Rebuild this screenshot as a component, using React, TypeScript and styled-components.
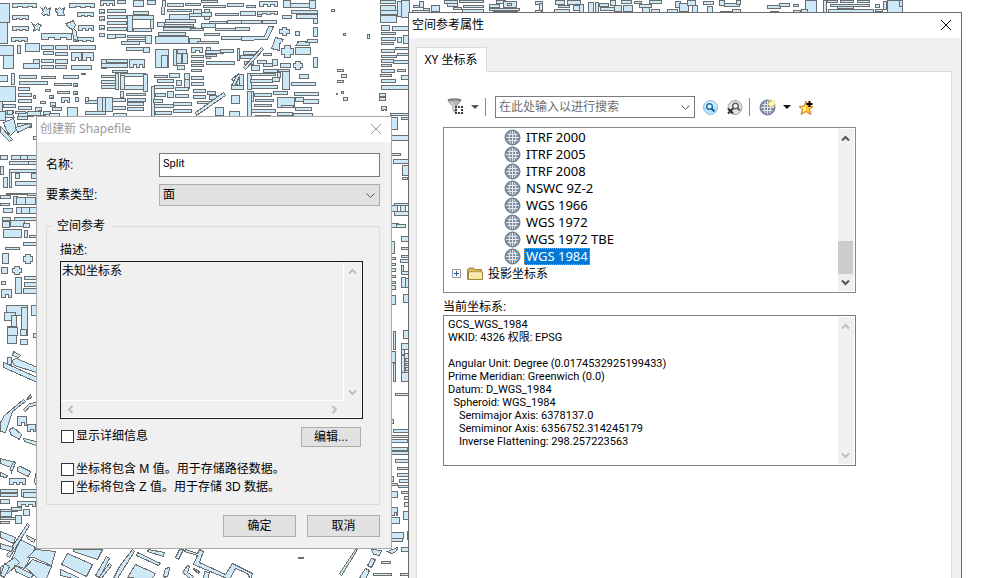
import React from "react";
import styled, { createGlobalStyle, css } from "styled-components";

const GlobalStyle = createGlobalStyle`
  *, *::before, *::after { box-sizing: border-box; }
  body { margin: 0; background: #fff; }
  button, input, select, textarea { font: inherit; color: inherit; border-radius: 0; margin: 0; }
`;

const uiFont = `"Noto Sans", "Noto Sans CJK SC", sans-serif`;
const cjkFont = `"Liberation Sans", "Noto Sans CJK SC", sans-serif`;

/* ---------- map ---------- */

type Tile = { x: number; y: number; blocks: string; shapes?: string[] };

/* Footprints are stored in thirds of a pixel. Each entry is
   [kind] x y w h: r = block, c = block with a toothed lower edge, x = cross. */
const tiles: Tile[] = [
  {
    x: 0,
    y: 0,
    blocks: `
    r -6 10 32 56;r -6 66 28 64;c 35 8 74 14;c 208 8 74 14;c 35 44 50 14;c 232 36 48 13;c 35 78 48 13;c 234 76 46 13;
    c 32 110 50 14;c 122 98 90 20;c 220 110 60 13;r -6 136 46 28;r 10 164 30 39;r 52 134 8 24;
    r 74 130 44 22;r 124 136 36 11;r 166 136 36 11;r 208 136 78 11;r 128 154 30 9;r 166 156 36 9;r 124 176 36 10;
    r 166 178 36 10;r 68 188 50 16;r 100 176 18 14;r 122 196 38 9;r 166 196 32 9;r 212 196 62 10;c 212 156 32 24;c 246 156 34 24;
    r -4 224 26 20;r 34 218 8 34;r 56 226 52 9;r 124 228 40 6;r 188 226 46 7;r 244 218 10 4;r 56 244 84 7;r 162 248 50 8;
    r -4 258 50 46;r 54 262 34 9;r 54 279 38 9;r 54 298 38 9;r 54 317 38 9;r 54 336 44 12;r 100 284 6 11;r 134 266 16 6;r 172 272 36 6;
    c 218 248 14 9;c 218 274 14 9;r 224 290 10 14;c 146 284 14 10;r 120 302 16 8;c 106 322 18 10;c 150 306 16 11;c 182 292 26 14;r 200 320 30 40;
    r 10 312 34 8;r 14 330 26 8;r -4 304 10 44;r 128 334 22 8;r 108 346 26 9;r 156 322 28 7;r 148 340 30 10;
    c 299 0 44 14;r 352 0 22 8;r 400 0 30 18;r 440 0 24 12;c 298 26 14 12;c 298 48 14 12;c 298 74 14 12;r 298 98 14 10;
    r 322 28 52 9;r 322 44 56 9;r 322 62 56 9;r 322 80 56 9;r 320 102 26 12;r 346 102 28 9;r 380 44 16 50;r 396 44 64 12;
    r 450 56 10 28;r 398 84 54 8;r 398 34 46 7;r 380 104 58 7;r 380 116 58 7;r 362 124 56 8;r 378 142 56 9;r 428 140 20 16;r 436 104 18 26;
    r 502 10 46 7;r 500 26 74 7;r 506 42 60 14;r 494 56 90 10;r 470 66 22 12;r 492 72 88 7;r 488 82 98 7;r 474 96 80 8;r 464 108 100 22;
    r 566 114 34 14;r 590 122 64 8;r 556 8 44 7;r 580 28 24 12;r 566 40 54 8;r 612 28 14 28;r 604 36 28 12;r 610 14 66 7;r 602 1 50 5;
    r 680 10 50 9;r 738 14 26 7;r 644 38 70 7;r 720 34 44 10;r 770 40 14 8;r 628 64 50 6;r 680 60 44 9;r 724 60 60 9;r 786 60 42 8;
    r 604 70 40 12;r 570 84 40 7;r 644 84 60 6;r 704 80 44 10;r 612 98 44 6;r 664 108 60 8;r 724 110 66 8;
    c 776 4 54 15;c 772 34 58 9;r 850 0 20 22;r 870 10 56 12;r 928 0 16 24;r 874 30 78 9;r 888 42 64 12;r 940 54 12 16;r 846 46 28 8;
    x 838 82 30 24;x 844 136 36 34;x 878 182 28 26;r 884 92 12 14;r 940 80 10 28;r 890 124 34 12;r 920 118 30 9;r 886 142 44 20;r 940 170 12 32;
    r 304 176 14 28;r 318 178 62 7;r 302 190 78 12;c 386 178 46 24;r 336 210 46 7;r 302 224 44 8;r 302 240 44 8;r 302 256 44 9;r 344 218 10 50;
    r 360 218 76 9;r 360 226 12 40;r 372 254 66 14;r 428 222 14 50;r 254 300 40 8;r 254 292 10 12;r 290 290 46 42;r 306 290 8 42;r 336 294 40 9;
    r 336 318 40 10;r 254 334 60 8;r 338 338 40 10;r 380 294 54 9;r 380 306 50 9;r 380 322 48 8;r 360 272 10 20;r 378 278 58 7;
    r 452 258 10 92;r 462 224 40 8;r 470 238 50 7;r 462 256 56 8;r 464 280 30 9;r 500 274 18 18;r 460 296 26 9;r 462 312 56 10;r 466 334 48 8;
    r 464 146 40 54;r 484 166 18 34;r 518 148 10 46;r 530 148 28 12;r 528 160 14 30;r 546 160 16 30;r 530 196 22 12;
    c 572 142 34 14;r 574 164 34 8;r 574 180 34 7;r 574 192 34 7;r 574 208 28 6;r 574 228 34 8;r 574 246 36 9;r 506 220 30 10;r 528 240 14 16;
    r 552 218 16 18;r 552 236 14 28;r 524 262 40 8;r 524 282 40 10;r 518 306 54 10;r 518 328 56 8;r 618 140 12 34;r 616 150 54 9;r 616 162 32 7;
    r 660 148 40 9;r 618 184 84 8;r 710 144 8 36;r 728 154 40 7;r 720 166 40 8;r 732 184 28 8;r 580 268 34 9;r 580 284 34 9;r 590 302 40 8;
    r 620 272 24 9;r 628 286 20 10;r 692 284 26 26;r 644 322 26 24;r 688 332 28 28;r 692 256 36 10;
    r 754 196 24 14;r 772 180 26 9;r 790 206 40 9;r 816 178 14 16;r 788 190 28 7;r 790 158 22 8;r 742 218 12 48;r 750 218 74 8;r 750 238 66 9;
    r 754 254 78 10;r 816 232 20 11;r 840 190 30 12;r 834 206 34 7;r 846 214 22 54;r 896 222 28 12;r 874 246 70 9;r 830 216 10 14;
    r 740 272 12 78;r 752 272 8 32;r 762 280 50 7;r 766 296 54 8;r 762 312 50 7;r 752 328 74 7;r 764 344 46 9;r 820 272 40 10;
    r 830 292 52 30;r 842 314 36 8;r 882 276 72 10;r 884 290 24 14;r 910 298 44 10;r 884 320 50 10;r 880 340 56 12;r 830 336 46 10;
    r 994 28 8 5;r 1028 98 8 8;r 1102 102 6 12;r 1010 208 20 5;r 1024 222 15 10;r 1012 240 18 6;r 1022 272 6 8;r 1030 290 10 10;r 1009 278 3 4;
    r 1140 0 44 9;r 1140 16 44 14;r 1140 30 50 12;r 1140 46 48 20;r 1192 4 10 44;r 1204 0 22 50;r 1144 76 24 13;r 1176 78 50 12;
    r 1144 96 40 7;r 1144 112 40 7;r 1144 126 36 6;r 1190 110 14 16;r 1210 104 16 26;r 1144 148 38 8;r 1144 164 44 7;r 1144 178 36 8;r 1144 192 30 7;
    r 1184 142 40 6;r 1190 158 36 7;r 1180 180 46 8;r 1142 208 40 7;r 1140 222 32 7;r 1142 236 44 9;r 1142 256 82 10;r 1192 206 24 6;r 1204 226 20 11;
    r 1138 278 16 9;r 1138 290 16 9;c 1144 318 14 12;r 1170 338 56 8`,
    shapes: [
      "486,0 496,0 492,42 482,42",
      "724,108 792,108 804,78 818,78 802,118 724,120",
      "728,202 784,140 790,146 734,206",
      "584,336 668,276 674,284 588,346",
      "196,68 208,66 218,60 224,74 220,84 228,94 232,120 220,118 216,86 204,82",
      "96,70 104,74 110,68 124,76 116,82 118,90 108,88 98,92 102,82",
      "122,24 130,26 134,18 140,26 150,22 146,34 148,44 136,42 128,46 122,38 128,32",
      "164,24 172,26 178,22 184,26 192,22 188,34 192,46 180,44 170,46 172,36 164,32",
      "694,236 714,218 718,224 698,240",
      "824,112 848,116 844,126 838,128 838,150 814,144 820,130",
      "694,256 712,222 728,222 728,256",
      "704,252 716,228 716,256",
      "886,136 898,124 926,126 926,136",
      "0,350 30,330 42,350",
    ],
  },
  {
    x: 0,
    y: 330,
    blocks: `
    r -4 2 20 28;r 20 0 16 12;r 44 2 30 8;r 80 4 40 12;r 52 38 40 14;r 52 18 30 8;r 98 78 12 9;r 0 136 22 10;r 32 134 76 12;r 60 134 20 12;
    r 26 154 60 8;r 84 154 26 8;r 26 176 84 9;r 0 168 10 24;r 28 186 6 46;r 46 190 12 14;r 94 190 16 14;r 44 214 64 12;r 10 202 12 30;
    r 18 248 64 5;r 82 248 28 8;r 38 258 14 24;r 48 262 27 20;r 75 262 31 20;r 0 254 30 9;r 0 278 26 8;r 10 294 26 11;r 48 290 16 20;r 62 290 24 20;r 86 290 24 20;
    r 6 322 24 8;r 42 322 66 7;r 6 334 22 18;r 30 330 42 18;r 10 358 52 22;r 70 340 16 10;r 72 360 8 22;r 86 374 24 8;r 70 396 40 8;r 14 410 44 8;
    r 6 428 18 30;x 68 432 28 28;x 36 468 28 24;r 4 470 18 20;r 72 498 38 9;r 46 502 18 48;r 72 516 38 12;r 68 534 40 16;r 4 514 10 8;c 4 536 30 24;
    r 18 586 62 30;r 12 606 34 24;r 34 616 14 60;r 62 590 18 86;r 92 586 18 30;r 22 648 26 42;r 100 668 10 14`,
    shapes: ["10,36 40,24 48,56 30,74 18,60", "0,48 36,86 26,94 0,66", "44,50 88,38 90,48 50,66"],
  },
  {
    x: 0,
    y: 990,
    blocks: `
    r 20 -8 30 24;r 22 16 26 22;r 60 -4 18 20;r 60 28 22 14;r 20 80 12 22;c 52 258 26 26;c 82 282 24 20;c 28 444 46 18;r 0 478 52 8;r 0 490 50 7;
    r 62 476 48 22;r 70 486 40 14;r 0 508 26 10;c 50 512 54 16;r 0 536 52 8;r 0 544 32 14;r 32 532 30 9;r 0 560 52 6;r 46 556 18 22;r 68 538 18 18;r 0 572 28 8`,
    shapes: [
      "8,96 110,142 110,156 8,112",
      "38,64 60,74 54,82 36,76",
      "34,90 48,84 110,112 108,126 42,104",
      "0,276 12,254 70,206 76,212 36,244 16,306 0,302",
      "78,206 90,192 94,200 82,208",
      "70,238 86,218 108,216 110,226 88,228 76,244",
      "28,298 38,292 64,312 56,328 30,312",
      "0,384 46,396 40,414 0,398",
      "30,414 40,392 46,396 34,426",
      "52,412 60,408 90,422 84,438 50,424",
      "0,426 20,434 18,442 0,438",
      "70,324 108,332 108,344 72,332",
      "18,676 80,580 86,586 28,682",
      "28,698 60,626 104,650 72,714",
      "74,710 96,686 154,708 138,744 110,744",
      "82,680 106,656 166,662 154,704 98,682",
      "0,604 46,622 40,638 0,620",
      "0,640 38,650 32,662 0,654",
      "0,712 42,682 56,696 20,730 0,728",
      "12,700 28,708 12,740 0,734",
      "42,704 98,732 90,744 44,724",
      "78,614 104,628 98,636 80,624",
      "104,430 110,426 110,470 102,456",
    ],
  },
  {
    x: 180,
    y: 1620,
    blocks: `r 714 50 14 4;r 938 98 56 8;r 1020 98 24 8;r 1022 20 24 13;r 962 62 28 8`,
    shapes: [
      "38,26 126,26 110,56 40,34",
      "22,40 96,72 78,108 4,72",
      "0,88 54,110 50,118 0,104",
      "104,104 138,48 148,54 116,112",
      "116,108 148,70 152,74 124,114",
      "216,26 222,34 172,114 158,114 178,78",
      "232,36 300,68 294,76 228,44",
      "264,26 312,36 308,48 260,34",
      "202,110 226,72 284,98 272,118",
      "316,84 328,80 324,104 312,112 308,104",
      "344,50 358,26 370,26 354,56",
      "376,26 410,38 418,26 430,32 416,66 494,102 516,70 576,98 570,116 562,100 524,84 506,118 400,72 412,46 372,32",
      "366,96 380,74 386,78 380,96 400,108 394,116",
      "432,94 448,96 440,116 430,116",
      "400,84 418,92 414,98 400,88",
      "838,100 884,26 890,28 844,104",
      "920,74 932,54 944,58 934,80",
      "896,110 914,84 928,90 916,116",
      "932,26 964,30 958,44 940,42",
      "982,32 1012,20 1008,34 992,38",
    ],
  },
  {
    x: 600,
    y: 330,
    blocks: `
    r 574 22 18 36;r 604 20 24 6;r 574 76 54 15;r 574 128 26 8;r 580 146 48 12;r 606 166 18 30;r 606 202 14 6;r 582 278 46 7;r 574 286 16 16;r 600 284 14 18;
    r 582 304 46 10;r 574 338 20 12;r 588 342 26 10;r 604 378 24 16;r 602 410 26 8;r 602 434 26 6;r 600 448 28 8;r 574 394 8 34;r 574 440 10 8;
    r 574 458 10 8;r 574 474 10 10;r 574 494 10 8;r 574 512 10 6;r 574 526 10 10;r 602 464 8 28;r 602 482 26 10;r 602 500 14 32;r 614 504 14 26;
    r 574 554 12 28;r 610 552 18 24`,
  },
  {
    x: 1164,
    y: 990,
    blocks: `
    r 14 4 8 52;r 46 0 18 24;r 40 38 22 18;r 38 58 10 14;r 40 76 8 72;r 48 68 14 58;r 52 84 10 8;r 52 98 10 8;r 52 112 10 8;r 40 126 22 26;
    r 10 64 12 32;r 14 98 6 56;r 22 190 40 6;r 10 268 6 10;r 16 298 46 8;r 10 314 52 6;r 10 328 46 8;r 10 350 46 9;r 10 364 50 8;
    r 22 388 40 9;r 28 410 34 8;r 28 430 34 9;r 32 448 30 7;r 30 464 32 8;r 10 438 6 14;r 10 458 16 8;r 40 482 22 8;r 10 482 18 20;r 48 498 14 9;
    r 48 516 14 12;c 10 532 18 24;r 10 560 22 18;r 44 542 18 24;r 10 606 36 18;r 10 624 32 8;r 56 604 8 24`,
  },
  {
    x: 1230,
    y: 0,
    blocks: `
    r 8 14 20 8;r 28 2 10 18;r 38 24 20 7;r 6 30 50 8;r 62 16 24 16;r 102 0 40 8;r 112 10 30 7;r 128 20 24 8;r 146 0 72 6;r 160 14 60 8;r 156 28 64 10;
    r 238 12 28 8;r 238 24 88 6;r 250 32 70 8;r 258 0 28 8;r 280 2 38 20;r 290 8 14 8;r 374 4 22 8;r 388 8 9 28;r 376 30 16 6;
    r 434 0 28 12;r 444 14 32 8;r 432 28 44 10;r 470 0 40 12;r 488 14 24 16;r 506 12 12 26;r 534 6 14 30;r 556 6 9 32;r 566 10 28 7;r 570 22 46 9;
    r 600 0 16 14;r 612 14 22 20;r 634 0 30 10;r 638 16 28 16;r 672 2 20 8;r 688 12 36 8;r 696 22 20 14;r 716 0 38 8;r 724 28 22 9;r 770 28 30 8;
    r 796 2 14 18;r 806 10 28 24;r 832 0 24 14;r 846 16 16 20;
    c 930 32 36 8;r 966 28 24 8;r 928 0 14 16;r 942 8 46 9;r 978 0 12 12;r 1070 14 40 9;r 1108 8 28 10;r 1150 12 14 7;r 1148 30 22 8;
    r 1186 0 32 38;r 1172 26 18 10;r 1240 0 8 38;r 1252 0 30 7;r 1260 12 116 5;r 1280 18 48 5;r 1254 28 136 10;r 1290 0 40 6;r 1340 0 36 6;
    r 1396 12 12 8;r 1394 26 22 6;r 1418 4 10 24;r 1430 0 46 38;r 1466 0 10 18;r 1080 32 24 5;r 880 4 28 8;r 892 18 14 20`,
  },
];

const px = (n: number) => Math.round(n / 3) + 0.5;

function footprint(kind: string, x: number, y: number, w: number, h: number) {
  const [l, t, r, b] = [px(x), px(y), px(x + w), px(y + h)];
  if (kind === "c") {
    const n = w > 40 ? 3 : 2;
    const step = (r - l) / (n * 2 - 1);
    const notch = b - Math.max(1, Math.round((b - t) / 3));
    let d = `M${l} ${t}H${r}V${b}`;
    for (let i = n - 1; i >= 0; i--) {
      const left = Math.round(l + step * i * 2) + 0.5;
      d += i ? `H${left}V${notch}H${left - Math.round(step)}V${b}` : `H${l}Z`;
    }
    return d;
  }
  if (kind === "x") {
    const a = Math.round((r - l) / 4);
    const c = Math.round((b - t) / 4);
    return `M${l + a} ${t}H${r - a}V${t + c}H${r}V${b - c}H${r - a}V${b}H${l + a}V${b - c}H${l}V${t + c}H${l + a}Z`;
  }
  return `M${l} ${t}H${r}V${b}H${l}Z`;
}

const footprints = tiles.flatMap((tile) => {
  const blocks = tile.blocks.split(";").map((entry) => {
    const [kind, x, y, w, h] = entry.trim().split(/\s+/);
    return footprint(kind, tile.x + +x, tile.y + +y, +w, +h);
  });
  const shapes = (tile.shapes ?? []).map((shape) => {
    const points = shape.split(" ").map((pair) => {
      const [x, y] = pair.split(",");
      return `${px(tile.x + +x)} ${px(tile.y + +y)}`;
    });
    return `M${points.join("L")}Z`;
  });
  return [...blocks, ...shapes];
});

const MapCanvas = styled.svg`
  position: absolute;
  top: 0;
  left: 0;
  width: 100%;
  height: 100%;
  shape-rendering: crispEdges;
  fill: #cde8f6;
  stroke: #6c6d6e;
`;

/* ---------- windows ---------- */

const Desktop = styled.main`
  position: relative;
  min-height: 100vh;
  overflow: hidden;
  background: #fff;
  font: 12px/16px ${cjkFont};
  color: #000;
`;

const Window = styled.section`
  position: absolute;
  display: flex;
  flex-direction: column;
  background: #f0f0f0;
`;

const ShapefileWindow = styled(Window)`
  left: 36px;
  top: 116px;
  width: 356px;
  border: 1px solid #a9a9a9;
`;

const PropertiesWindow = styled(Window)`
  left: 408px;
  right: 28px;
  top: 12px;
  bottom: 0;
  border: 1px solid #6a6a6a;
  border-bottom: 0;
`;

const TitleBar = styled.header<{ $inactive?: boolean }>`
  display: flex;
  align-items: center;
  justify-content: space-between;
  height: 25px;
  padding: 0 9px 1px 3px;
  background: #fff;
  color: ${(p) => (p.$inactive ? "#999" : "#000")};
  font-family: ${uiFont};
`;

const Title = styled.h1`
  margin: 0;
  font: inherit;
`;

const IconButton = styled.button`
  display: flex;
  align-items: center;
  justify-content: center;
  padding: 0;
  border: 0;
  background: none;
`;

const CloseIcon = () => (
  <svg width="12" height="12" viewBox="0 0 12 12" fill="none" stroke="currentColor">
    <path d="M1 1 11 11M11 1 1 11" />
  </svg>
);

const Chevron = styled.svg<{ $turn?: number; $tone?: string; $thin?: boolean }>`
  width: 9px;
  height: 9px;
  fill: none;
  stroke: ${(p) => p.$tone ?? "#555"};
  stroke-width: ${(p) => (p.$thin ? 1 : 2)};
  transform: rotate(${(p) => p.$turn ?? 0}deg);
`;

const Arrow = ({ turn = 0, tone, thin }: { turn?: number; tone?: string; thin?: boolean }) => (
  <Chevron viewBox="0 0 9 9" $turn={turn} $tone={tone} $thin={thin} aria-hidden>
    <path d={thin ? "M0.5 2.5 4.5 6.5 8.5 2.5" : "M1 2.5 4.5 6 8 2.5"} />
  </Chevron>
);

/* ---------- new shapefile form ---------- */

const Form = styled.form`
  display: flex;
  flex-direction: column;
  padding: 11px 11px 11px 9px;
`;

const Field = styled.div<{ $height: number }>`
  display: grid;
  grid-template-columns: 113px 1fr;
  align-items: center;
  height: ${(p) => p.$height}px;
  margin-bottom: 7px;
`;

const TextInput = styled.input`
  width: 100%;
  height: 24px;
  padding: 0 3px 3px;
  border: 1px solid #7a7a7a;
  background: #fff;
  font: 11px/16px Roboto, sans-serif;
`;

const SelectWrap = styled.div`
  display: grid;
  align-items: center;
  & > * { grid-area: 1 / 1; }
  & > svg { justify-self: end; margin-right: 5px; pointer-events: none; }
`;

const Select = styled.select`
  appearance: none;
  height: 22px;
  padding: 0 3px;
  border: 1px solid #adadad;
  background: #e1e1e1;
  outline: 0;
`;

const Group = styled.fieldset`
  min-width: 0;
  margin: 5px 0 10px;
  padding: 8px 16px 8px 13px;
  border: 1px solid #dcdcdc;
`;

const Legend = styled.legend`
  margin-left: -7px;
  padding: 0 6px 0 4px;
`;

const DescriptionBox = styled.div`
  display: grid;
  grid-template-columns: 1fr 19px;
  grid-template-rows: 138px 18px;
  margin: 3px 0 8px;
  border: 1px solid #1a1a1a;
`;

const Description = styled.textarea`
  resize: none;
  overflow: hidden;
  padding: 1px;
  border: 0;
  background: transparent;
`;

const SunkenBar = styled.div<{ $horizontal?: boolean }>`
  display: flex;
  flex-direction: ${(p) => (p.$horizontal ? "row" : "column")};
  justify-content: space-between;
  align-items: center;
  ${(p) =>
    p.$horizontal
      ? css`padding: 0 4px 0 5px; border-top: 1px solid #fff; border-bottom: 1px solid #fff;`
      : css`padding: 5px 0 3px; border-left: 1px solid #fff; border-right: 1px solid #fff;`}
`;

const Corner = styled.div`
  border: solid #fff;
  border-width: 0 1px 1px 0;
`;

const Row = styled.div`
  display: flex;
  align-items: flex-start;
  justify-content: space-between;
  padding-right: 2px;
  margin-bottom: 13px;
`;

const CheckLabel = styled.label`
  display: flex;
  align-items: center;
  gap: 2px;
  height: 18px;
  padding-left: 1px;
  white-space: nowrap;
`;

const CheckBox = styled.input`
  appearance: none;
  flex: none;
  width: 13px;
  height: 13px;
  border: 1px solid #333;
  background: #fff;
`;

const Button = styled.button<{ $wide?: boolean }>`
  width: ${(p) => (p.$wide ? 73 : 60)}px;
  height: ${(p) => (p.$wide ? 22 : 20)}px;
  padding: 0;
  border: 1px solid #adadad;
  background: #e1e1e1;
`;

const Actions = styled.div`
  display: flex;
  justify-content: flex-end;
  gap: 11px;
`;

function ShapefileForm() {
  return (
    <ShapefileWindow aria-label="创建新 Shapefile">
      <TitleBar $inactive>
        <Title>创建新 Shapefile</Title>
        <IconButton aria-label="关闭"><CloseIcon /></IconButton>
      </TitleBar>
      <Form onSubmit={(e) => e.preventDefault()}>
        <Field $height={24}>
          <label htmlFor="name">名称:</label>
          <TextInput id="name" defaultValue="Split" />
        </Field>
        <Field $height={22}>
          <label htmlFor="kind">要素类型:</label>
          <SelectWrap>
            <Select id="kind" defaultValue="面"><option>面</option></Select>
            <Arrow thin />
          </SelectWrap>
        </Field>
        <Group>
          <Legend>空间参考</Legend>
          <label htmlFor="description">描述:</label>
          <DescriptionBox>
            <Description id="description" readOnly value="未知坐标系" />
            <SunkenBar>
              <Arrow turn={180} tone="#bfbfbf" />
              <Arrow tone="#bfbfbf" />
            </SunkenBar>
            <SunkenBar $horizontal>
              <Arrow turn={90} tone="#bfbfbf" />
              <Arrow turn={270} tone="#bfbfbf" />
            </SunkenBar>
            <Corner />
          </DescriptionBox>
          <Row>
            <CheckLabel><CheckBox type="checkbox" />显示详细信息</CheckLabel>
            <Button type="button">编辑...</Button>
          </Row>
          <CheckLabel><CheckBox type="checkbox" />坐标将包含 M 值。用于存储路径数据。</CheckLabel>
          <CheckLabel><CheckBox type="checkbox" />坐标将包含 Z 值。用于存储 3D 数据。</CheckLabel>
        </Group>
        <Actions>
          <Button $wide type="submit">确定</Button>
          <Button $wide type="button">取消</Button>
        </Actions>
      </Form>
    </ShapefileWindow>
  );
}

/* ---------- spatial reference properties ---------- */

const TabArea = styled.div`
  display: flex;
  flex: 1;
  flex-direction: column;
  padding: 9px 9px 0 7px;
`;

const Tab = styled.button`
  align-self: flex-start;
  width: 71px;
  height: 25px;
  margin-bottom: -1px;
  padding: 0 1px 1px 0;
  border: 1px solid #dcdcdc;
  border-bottom: 0;
  background: #fff;
  font-family: ${uiFont};
  z-index: 1;
`;

const Panel = styled.div`
  flex: 1;
  padding: 24px 95px 0 26px;
  border: 1px solid #dcdcdc;
  border-bottom: 0;
  background: #fff;
`;

const Toolbar = styled.div`
  display: flex;
  align-items: center;
  height: 22px;
  padding-left: 4px;
`;

const Divider = styled.span`
  width: 1px;
  height: 18px;
  margin: 0 9px 0 6px;
  background: #8a8a8a;
`;

const SearchBox = styled.div`
  display: flex;
  align-items: center;
  flex: 0 1 200px;
  height: 22px;
  padding: 0 4px 0 3px;
  border: 1px solid #7a7a7a;
`;

const SearchInput = styled.input`
  flex: 1;
  min-width: 0;
  padding: 0;
  border: 0;
  outline: 0;
  background: none;
  &::placeholder { color: #6d6d6d; opacity: 1; }
`;

const Tools = styled.div<{ $first?: boolean }>`
  display: flex;
  align-items: center;
  gap: 7px;
  padding-left: ${(p) => (p.$first ? 0 : 7)}px;
`;

const Funnel = () => (
  <svg width="17" height="18" viewBox="0 0 17 18">
    <path d="M1 2.500H14L9 8.500V15L6 12.500V8.500Z" fill="#b9b9b9" stroke="#8f8f8f" />
    <path d="M1 2Q7.500 0 14 2" fill="none" stroke="#777" strokeWidth="1.500" />
    <path d="M4 4 7 8V12" fill="none" stroke="#ececec" />
    <path
      d="M8 8H10V10H8ZM11 8H13V10H11ZM14 8H16V10H14ZM8 11H10V13H8ZM14 11H16V13H14ZM8 14H10V16H8ZM11 14H13V16H11ZM14 14H16V16H14Z"
      fill="#3a3a3a"
    />
  </svg>
);

const Caret = ({ tone }: { tone: string }) => (
  <svg width="8" height="5" viewBox="0 0 8 5"><path d="M0 0H8L4 4Z" fill={tone} /></svg>
);

const Magnifier = () => (
  <svg width="17" height="17" viewBox="0 0 17 17">
    <circle cx="8.5" cy="8.5" r="7" fill="#b8e0f8" stroke="#8dbde0" />
    <path d="M2.500 8Q3.500 2.500 8.500 2.500T14.500 8Q9 5 2.500 8" fill="#d9f0fd" />
    <circle cx="7.5" cy="7.5" r="2.800" fill="#e6f6ff" stroke="#1673ae" strokeWidth="1.500" />
    <path d="M9.5 9.5 12.500 12.500" stroke="#12619a" strokeWidth="2" />
  </svg>
);

const ClearSearch = () => (
  <svg width="17" height="17" viewBox="0 0 17 17">
    <circle cx="9" cy="8.5" r="7" fill="#e2e2e2" stroke="#a5a5a5" />
    <circle cx="9.5" cy="7" r="2.800" fill="#f5f5f5" stroke="#666" strokeWidth="1.500" />
    <path d="M11.500 9 14 11.500" stroke="#666" strokeWidth="2" />
    <path d="M2 9.500 7 14.500M7 9.500 2 14.500" stroke="#333" strokeWidth="2" />
  </svg>
);

const Globe = ({ spark }: { spark?: boolean }) => (
  <svg width="17" height="17" viewBox="0 0 17 17">
    <circle cx="8.5" cy="8.5" r="7.500" fill="#7c8b9e" stroke="#6d7a8b" />
    <path
      d="M8.5 2V15M2 8.5H15M3.500 5.500H13.500M3.500 11.500H13.500M6.500 2.500Q3.500 8.500 6.500 14.500M10.500 2.500Q13.500 8.500 10.500 14.500"
      fill="none"
      stroke="#e3e9f0"
    />
    {spark && (
      <path
        d="M12.500 0 13.500 3 16 1 15 4 17 5.500 14.500 6 15 9 12.500 7 10 9 10.500 6 8 5 10.500 4 9.500 1 12 3Z"
        fill="#fffcb0"
        stroke="#e6d15b"
        strokeWidth=".5"
      />
    )}
  </svg>
);

const StarPlus = () => (
  <svg width="17" height="17" viewBox="0 0 17 17">
    <path d="M8 2 10 7 15 7.500 11.500 10.500 13 15.500 8 12.500 3 15.500 4.500 10.500 1 7.500 6 7Z" fill="#ffc832" stroke="#cf7a24" />
    <path d="M8 5V11L4.500 13.500 6 10 3.500 8H7Z" fill="#fff3a6" />
    <path d="M11.500 2V8M8.500 5H14.500" stroke="#000" strokeWidth="2" />
  </svg>
);

const Tree = styled.div`
  display: flex;
  height: 166px;
  margin-top: 9px;
  border: 1px solid #828790;
  padding: 1px;
`;

const TreeList = styled.ul`
  flex: 1;
  margin: 0;
  padding: 0;
  list-style: none;
  font: 13px/17px ${uiFont};
`;

const TreeItem = styled.li<{ $root?: boolean }>`
  display: flex;
  align-items: center;
  height: 17px;
  padding-left: ${(p) => (p.$root ? 7 : 59)}px;
  font-size: ${(p) => (p.$root ? 12 : 13)}px;
`;

const ItemLabel = styled.span<{ $selected?: boolean }>`
  margin-left: 3px;
  padding: 0 1px;
  line-height: 15px;
  border: 1px solid transparent;
  ${(p) =>
    p.$selected &&
    css`
      border: 1px dotted #e8933a;
      background: #0078d7;
      color: #fff;
    `}
`;

const Expander = () => (
  <svg width="9" height="9" viewBox="0 0 9 9">
    <path d="M.5.5H8.5V8.5H.5Z" fill="#fafafa" stroke="#989898" />
    <path d="M2 4.5H7M4.5 2V7" stroke="#2d4fa3" />
  </svg>
);

const FolderIcon = styled.svg`
  margin-left: 6px;
`;

const Folder = () => (
  <FolderIcon width="16" height="14" viewBox="0 0 16 14">
    <path d="M.5 12.500V2.500L2 1H6.500L8 2.500H14.500V12.500Z" fill="#d3ba5c" stroke="#a08a3c" />
    <path d="M1.500 12.500V5H15.500V12.500Z" fill="#f4e6a4" stroke="#a08a3c" />
    <path d="M2.500 6H14.500" stroke="#fffbd8" />
  </FolderIcon>
);

const ScrollBar = styled.div`
  display: flex;
  flex-direction: column;
  align-items: center;
  width: 16px;
  padding: 5px 1px 4px 0;
  background: #f0f0f0;
`;

const Track = styled.div`
  flex: 1;
  display: flex;
  flex-direction: column;
  justify-content: flex-end;
  align-self: stretch;
  padding-bottom: 4px;
`;

const Thumb = styled.div`
  height: 33px;
  background: #cdcdcd;
`;

const CurrentLabel = styled.div`
  margin: 6px 0 0;
`;

const Details = styled.div`
  display: flex;
  height: 151px;
  padding: 1px;
  border: 1px solid #7a7a7a;
`;

const DetailText = styled.pre`
  flex: 1;
  min-width: 0;
  margin: 0;
  padding: 1px 3px;
  font: 11px/13px Roboto, "Noto Sans CJK SC", sans-serif;
`;

const systems = ["ITRF 2000", "ITRF 2005", "ITRF 2008", "NSWC 9Z-2", "WGS 1966", "WGS 1972", "WGS 1972 TBE", "WGS 1984"];

const details = `GCS_WGS_1984
WKID: 4326 权限: EPSG

Angular Unit: Degree (0.0174532925199433)
Prime Meridian: Greenwich (0.0)
Datum: D_WGS_1984
  Spheroid: WGS_1984
    Semimajor Axis: 6378137.0
    Semiminor Axis: 6356752.314245179
    Inverse Flattening: 298.257223563`;

function SpatialReference() {
  return (
    <PropertiesWindow aria-label="空间参考属性">
      <TitleBar>
        <Title>空间参考属性</Title>
        <IconButton aria-label="关闭"><CloseIcon /></IconButton>
      </TitleBar>
      <TabArea>
        <Tab role="tab" aria-selected>XY 坐标系</Tab>
        <Panel role="tabpanel">
          <Toolbar>
            <Tools $first>
              <IconButton aria-label="过滤"><Funnel /></IconButton>
              <IconButton aria-label="过滤选项"><Caret tone="#555" /></IconButton>
            </Tools>
            <Divider />
            <SearchBox>
              <SearchInput aria-label="搜索" placeholder="在此处输入以进行搜索" />
              <IconButton aria-label="展开"><Arrow thin /></IconButton>
            </SearchBox>
            <Tools>
              <IconButton aria-label="搜索坐标系"><Magnifier /></IconButton>
              <IconButton aria-label="清除搜索"><ClearSearch /></IconButton>
            </Tools>
            <Divider />
            <IconButton aria-label="添加坐标系"><Globe spark /></IconButton>
            <Tools>
              <IconButton aria-label="更多"><Caret tone="#111" /></IconButton>
              <IconButton aria-label="添加到收藏夹"><StarPlus /></IconButton>
            </Tools>
          </Toolbar>
          <Tree>
            <TreeList>
              {systems.map((name) => (
                <TreeItem key={name}>
                  <Globe />
                  <ItemLabel $selected={name === "WGS 1984"}>{name}</ItemLabel>
                </TreeItem>
              ))}
              <TreeItem $root>
                <Expander />
                <Folder />
                <ItemLabel>投影坐标系</ItemLabel>
              </TreeItem>
            </TreeList>
            <ScrollBar>
              <Arrow turn={180} />
              <Track><Thumb /></Track>
              <Arrow />
            </ScrollBar>
          </Tree>
          <CurrentLabel>当前坐标系:</CurrentLabel>
          <Details>
            <DetailText>{details}</DetailText>
            <ScrollBar>
              <Arrow turn={180} tone="#bfbfbf" />
              <Track />
              <Arrow tone="#bfbfbf" />
            </ScrollBar>
          </Details>
        </Panel>
      </TabArea>
    </PropertiesWindow>
  );
}

export default function App() {
  return (
    <Desktop>
      <GlobalStyle />
      <MapCanvas aria-hidden>
        {footprints.map((d, i) => (
          <path key={i} d={d} />
        ))}
      </MapCanvas>
      <SpatialReference />
      <ShapefileForm />
    </Desktop>
  );
}
